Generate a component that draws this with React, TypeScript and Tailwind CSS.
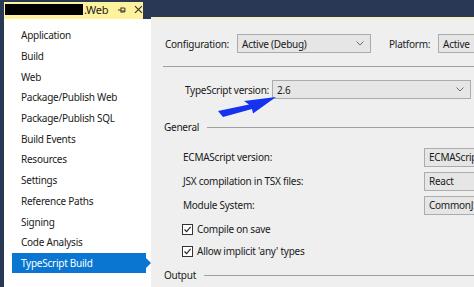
import React from "react";

const items = [
  "Application",
  "Build",
  "Web",
  "Package/Publish Web",
  "Package/Publish SQL",
  "Build Events",
  "Resources",
  "Settings",
  "Reference Paths",
  "Signing",
  "Code Analysis",
  "TypeScript Build",
];

function Chevron() {
  return (
    <svg width="8" height="5" viewBox="0 0 8 5" className="shrink-0">
      <path d="M0.5 0.5 L4 4 L7.5 0.5" fill="none" stroke="#6d6d6d" strokeWidth="1" />
    </svg>
  );
}

function Select({ value, className, chevron = true }: { value: string; className: string; chevron?: boolean }) {
  return (
    <div
      className={`flex items-center justify-between overflow-hidden border border-[#acacac] bg-[#e6e6e6] pl-[4px] pr-[6px] ${className}`}
    >
      <span className="whitespace-nowrap">{value}</span>
      {chevron && <Chevron />}
    </div>
  );
}

function Check({ label }: { label: string }) {
  return (
    <div className="flex h-[22px] items-center gap-[4px] pl-[31px]">
      <div className="flex h-[11px] w-[11px] items-center justify-center border border-[#333] bg-white">
        <svg width="9" height="9" viewBox="0 0 9 9">
          <path d="M1.5 4.5 L3.6 6.6 L7.6 1.8" fill="none" stroke="#222" strokeWidth="1.1" />
        </svg>
      </div>
      <span>{label}</span>
    </div>
  );
}

function Section({ title, lineLeft }: { title: string; lineLeft: string }) {
  return (
    <div className="flex h-full items-center pl-[13px]">
      <span>{title}</span>
      <div className={`h-px flex-1 bg-[#a0a0a0] ${lineLeft}`} />
    </div>
  );
}

export default function App() {
  return (
    <div
      className="relative flex h-[287px] w-[474px] flex-col overflow-hidden bg-[#293955] text-[10px] leading-none tracking-[-0.25px] text-[#1a1a1a]"
      style={{ fontFamily: '"Noto Sans", "Open Sans", sans-serif' }}
    >
      {/* top bar */}
      <div className="flex h-[17px] shrink-0 items-end">
        <div className="ml-[4px] flex h-[15px] w-[139px] items-center bg-[#fff29d] pl-[1px]">
          <div className="h-[11px] w-[79px] bg-black" />
          <span className="ml-[1px] text-[11px]">.Web</span>
          <svg width="10" height="8" viewBox="0 0 10 8" className="ml-[9px]">
            <path d="M1 4 H4 M4 1.5 V6.5 M4 2 H8 V6 H4 M4 5 H8" fill="none" stroke="#333" strokeWidth="1" />
          </svg>
          <svg width="9" height="9" viewBox="0 0 9 9" className="ml-[7px]">
            <path d="M1 1 L8 8 M8 1 L1 8" fill="none" stroke="#333" strokeWidth="1.2" />
          </svg>
        </div>
      </div>
      <div className="flex min-h-0 flex-1">
        <div className="w-[4px] shrink-0" />
        {/* sidebar */}
        <div className="flex w-[147px] shrink-0 flex-col">
          <div className="flex h-[2px] w-[139px] bg-[#fff29d]" />
          <div className="flex flex-1 flex-col bg-white pt-[6px]">
            {items.map((it) => {
              const sel = it === "TypeScript Build";
              return (
                <div
                  key={it}
                  className={`relative ml-[8px] flex h-[20.7px] w-[134px] items-center pl-[9px] ${
                    sel ? "bg-[#0a76d2] text-white" : ""
                  }`}
                >
                  {it}
                  {sel && (
                    <div className="absolute right-[-5px] top-1/2 h-0 w-0 -translate-y-1/2 border-y-[5px] border-l-[5px] border-y-transparent border-l-[#0a76d2]" />
                  )}
                </div>
              );
            })}
          </div>
        </div>
        {/* content */}
        <div className="flex min-w-0 flex-1 flex-col">
          <div className="h-[2px] bg-[#eef2c4]" />
          <div className="flex min-w-0 flex-1 flex-col overflow-hidden bg-[#efefef]">
            <div className="mt-[15px] flex h-[19px] items-center pl-[14px]">
              <span className="w-[72px] shrink-0 whitespace-nowrap">Configuration:</span>
              <Select value="Active (Debug)" className="h-[19px] w-[134px] shrink-0" />
              <span className="ml-[18px] w-[49px] shrink-0 whitespace-nowrap">Platform:</span>
              <Select value="Active" className="h-[19px] w-[60px] shrink-0" chevron={false} />
            </div>
            <div className="ml-[12px] mt-[13px] h-px bg-[#a0a0a0]" />
            <div className="mt-[13px] flex h-[19px] items-center pl-[34px]">
              <span className="w-[87px] shrink-0 whitespace-nowrap">TypeScript version:</span>
              <Select value="2.6" className="h-[19px] w-[199px] shrink-0" />
            </div>
            <div className="mt-[20px] h-[16px]">
              <Section title="General" lineLeft="ml-[8px]" />
            </div>
            <div className="mt-[10px] flex h-[24px] items-center pl-[32px]">
              <span className="w-[241px] shrink-0 whitespace-nowrap">ECMAScript version:</span>
              <Select value="ECMAScript" className="h-[19px] w-[60px] shrink-0" chevron={false} />
            </div>
            <div className="flex h-[24px] items-center pl-[32px]">
              <span className="w-[241px] shrink-0 whitespace-nowrap">JSX compilation in TSX files:</span>
              <Select value="React" className="h-[19px] w-[60px] shrink-0" chevron={false} />
            </div>
            <div className="flex h-[24px] items-center pl-[32px]">
              <span className="w-[241px] shrink-0 whitespace-nowrap">Module System:</span>
              <Select value="CommonJS" className="h-[19px] w-[60px] shrink-0" chevron={false} />
            </div>
            <div className="mt-[1px]">
              <Check label="Compile on save" />
              <Check label="Allow implicit 'any' types" />
            </div>
            <div className="mt-[5px] h-[16px]">
              <Section title="Output" lineLeft="ml-[8px]" />
            </div>
          </div>
        </div>
      </div>
      {/* blue arrow annotation */}
      <svg
        className="pointer-events-none absolute left-0 top-0"
        width="474"
        height="287"
        viewBox="0 0 474 287"
      >
        <polygon
          points="276,97 244,101 249,104.5 218,111 223,117 252,109 253,113.5"
          fill="#1533ee"
        />
      </svg>
    </div>
  );
}
